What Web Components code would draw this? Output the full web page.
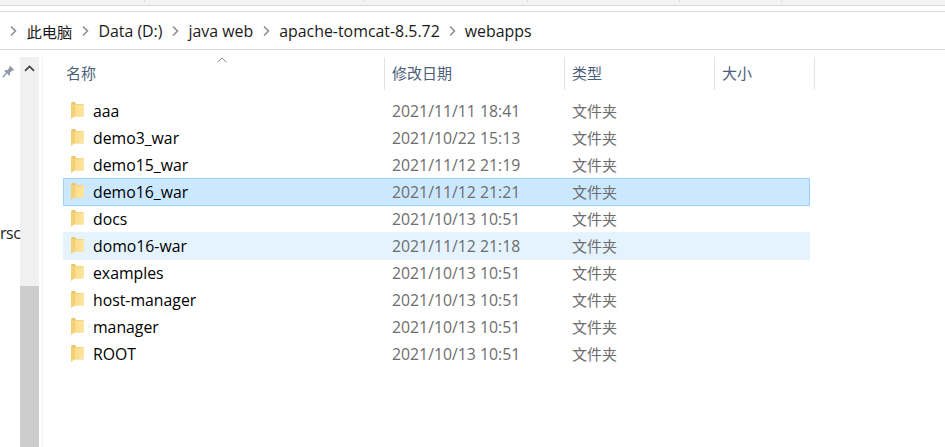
<!DOCTYPE html>
<html lang="zh">
<head>
<meta charset="utf-8">
<title>webapps</title>
<style>
  html, body { margin: 0; height: 100%; background: #fff; overflow: hidden; }
  body { font: 15.8px "Open Sans", "Noto Sans CJK SC", sans-serif; }
</style>
</head>
<body>
<ex-window>
  <ex-ribbon slot="ribbon"></ex-ribbon>
  <ex-address slot="address">
    <ex-crumb cjk>此电脑</ex-crumb>
    <ex-crumb>Data (D:)</ex-crumb>
    <ex-crumb>java web</ex-crumb>
    <ex-crumb>apache-tomcat-8.5.72</ex-crumb>
    <ex-crumb last>webapps</ex-crumb>
  </ex-address>
  <ex-nav slot="nav"></ex-nav>
  <ex-files slot="files">
    <ex-row name="aaa" date="2021/11/11 18:41"></ex-row>
    <ex-row name="demo3_war" date="2021/10/22 15:13"></ex-row>
    <ex-row name="demo15_war" date="2021/11/12 21:19"></ex-row>
    <ex-row name="demo16_war" date="2021/11/12 21:21" state="selected"></ex-row>
    <ex-row name="docs" date="2021/10/13 10:51"></ex-row>
    <ex-row name="domo16-war" date="2021/11/12 21:18" state="hover"></ex-row>
    <ex-row name="examples" date="2021/10/13 10:51"></ex-row>
    <ex-row name="host-manager" date="2021/10/13 10:51"></ex-row>
    <ex-row name="manager" date="2021/10/13 10:51"></ex-row>
    <ex-row name="ROOT" date="2021/10/13 10:51"></ex-row>
  </ex-files>
</ex-window>

<script>
  // base class: every element just stamps its markup into an open shadow root
  class ShadowBase extends HTMLElement {
    constructor(html) {
      super();
      this.attachShadow({mode: 'open'}).innerHTML = html;
    }
  }

  class ExWindow extends ShadowBase {
    constructor() {
      super(`
        <style>
          :host { display: flex; flex-direction: column; width: 945px; height: 447px; overflow: hidden; }
          .body { flex: 1; display: flex; min-height: 0; }
        </style>
        <slot name="ribbon"></slot>
        <slot name="address"></slot>
        <div class="body">
          <slot name="nav"></slot>
          <slot name="files"></slot>
        </div>
      `);
    }
  }

  class ExRibbon extends ShadowBase {
    constructor() {
      super(`
        <style>
          :host { display: block; height: 12px; box-sizing: border-box; border-bottom: 1px solid #dcdcdc; }
          .strip { height: 5px; background: #f3f4f6; border-bottom: 1px solid #d9d9d9; display: flex; }
          .strip i { display: block; height: 2px; border-right: 1px solid #dcdde0; box-sizing: content-box; }
        </style>
        <div class="strip">
          <i style="width:144px"></i>
          <i style="width:219px"></i>
          <i style="width:162px"></i>
          <i style="width:151px"></i>
          <i style="width:101px"></i>
        </div>
      `);
    }
  }

  class ExAddress extends ShadowBase {
    constructor() {
      super(`
        <style>
          :host { display: flex; align-items: center; height: 38px; box-sizing: border-box; padding-left: 9px; border-bottom: 1px solid #d9d9d9; }
        </style>
        <slot></slot>
      `);
    }
  }

  class ExCrumb extends ShadowBase {
    constructor() {
      super(`
        <style>
          :host { display: inline-flex; align-items: center; color: #1a1a1a; font-size: 15.9px; }
          :host([cjk]) { font-size: 15.3px; }
          svg { width: 8px; height: 12px; margin-right: 9.5px; flex: none; }
          :host([last]) svg { margin-right: 8.5px; }
          span { padding-right: 8.5px; }
        </style>
        <svg viewBox="0 0 8 12"><path d="M2 1.500 6.500 6 2 10.500" fill="none" stroke="#8c8c8c" stroke-width="1.500"/></svg>
        <span><slot></slot></span>
      `);
    }
  }

  class ExNav extends ShadowBase {
    constructor() {
      super(`
        <style>
          :host { display: flex; flex: none; width: 43px; height: 100%; }
          .pane { width: 20px; position: relative; }
          .pin { position: absolute; left: 2px; top: 15px; width: 13px; height: 13px; }
          .cut { position: absolute; left: 0; top: 175px; color: #1a1a1a; font-size: 15.8px; letter-spacing: -.4px; line-height: 16px; white-space: nowrap; }
          .bar { width: 19px; background: #f0f0f0; display: flex; flex-direction: column; margin-top: 7px; height: calc(100% - 7px); }
          .arrow { height: 22px; display: flex; align-items: center; justify-content: center; }
          .arrow svg { width: 11px; height: 7px; }
          .gap { flex: 1; }
          .thumb { height: 161px; background: #cdcdcd; }
          .edge { width: 4px; box-sizing: border-box; border-right: 1px solid #f2f2f2; margin-top: 7px; }
        </style>
        <div class="pane">
          <svg class="pin" viewBox="0 0 13 13">
            <path d="M8 .8 12.200 5l-1 .8-1-.3L7.800 8l.3 2-.9.8L2.300 5.900l.8-.9 2 .3L7.500 2.800l-.3-1z" fill="#8e9aa5"/>
            <path d="M4.300 8.200.8 12.200" stroke="#8e9aa5" stroke-width="1.300"/>
          </svg>
          <span class="cut">rsc</span>
        </div>
        <div class="bar">
          <div class="arrow"><svg viewBox="0 0 11 7"><path d="M1 5.800 5.500 1.500 10 5.800" fill="none" stroke="#404040" stroke-width="1.700"/></svg></div>
          <div class="gap"></div>
          <div class="thumb"></div>
        </div>
        <div class="edge"></div>
      `);
    }
  }

  class ExFiles extends ShadowBase {
    constructor() {
      super(`
        <style>
          :host { display: block; flex: 1; min-width: 0; position: relative; }
          .head { display: grid; grid-template-columns: 342px 180px 150px 100px; height: 31px; margin-top: 7px; width: 772px; }
          .head div { box-sizing: border-box; border-right: 1px solid #e3e3e3; padding-left: 7px; line-height: 33px; color: #4c607a; font-size: 15px; }
          .head div:first-child { padding-left: 23px; }
          .sort { position: absolute; left: 174px; top: 7px; width: 10px; height: 6px; }
          .list { display: flex; flex-direction: column; margin: 9px 0 0 20px; width: 747px; }
        </style>
        <div class="head"><div>名称</div><div>修改日期</div><div>类型</div><div>大小</div></div>
        <svg class="sort" viewBox="0 0 10 6"><path d="M.5 5.200 5 1l4.500 4.200" fill="none" stroke="#8a8a8a"/></svg>
        <div class="list"><slot></slot></div>
      `);
    }
  }

  class ExRow extends ShadowBase {
    constructor() {
      super(`
        <style>
          :host { display: grid; grid-template-columns: 329px 180px 1fr; height: 27px; line-height: 28px; box-sizing: border-box; }
          :host([state="selected"]) { background: #cce8ff; box-shadow: inset 0 0 0 1px #99d1ff; height: 28px; margin-bottom: -1px; }
          :host([state="hover"]) { background: #e5f3ff; height: 28px; margin-bottom: -1px; }
          .name { display: flex; align-items: flex-start; padding-left: 8px; color: #000; font-size: 15.8px; }
          svg { width: 13px; height: 17px; margin: 5px 9px 0 0; flex: none; }
          .date { color: #6d6d6d; font-size: 15.8px; }
          .kind { color: #6d6d6d; font-size: 15px; }
        </style>
        <div class="name">
          <svg viewBox="0 0 13 18" preserveAspectRatio="none">
            <defs><linearGradient id="f" x1="0" x2="1" y1="0" y2="0"><stop offset="0" stop-color="#fbdc86"/><stop offset="1" stop-color="#fee6a0"/></linearGradient></defs>
            <path d="M.5 0H4L5 2H12.500V15H.5z" fill="#ebc263"/>
            <path d="M3.500 2.600h9.500v12.800h-9.500z" fill="url(#f)"/>
            <path d="M0 .8 3.500 2.600V15.400L0 18z" fill="#f4d179"/>
          </svg>
          <span class="label"></span>
        </div>
        <div class="date"></div>
        <div class="kind">文件夹</div>
      `);
    }
    connectedCallback() {
      this.shadowRoot.querySelector('.label').textContent = this.getAttribute('name');
      this.shadowRoot.querySelector('.date').textContent = this.getAttribute('date');
    }
  }

  customElements.define('ex-window', ExWindow);
  customElements.define('ex-ribbon', ExRibbon);
  customElements.define('ex-address', ExAddress);
  customElements.define('ex-crumb', ExCrumb);
  customElements.define('ex-nav', ExNav);
  customElements.define('ex-files', ExFiles);
  customElements.define('ex-row', ExRow);
</script>
</body>
</html>
